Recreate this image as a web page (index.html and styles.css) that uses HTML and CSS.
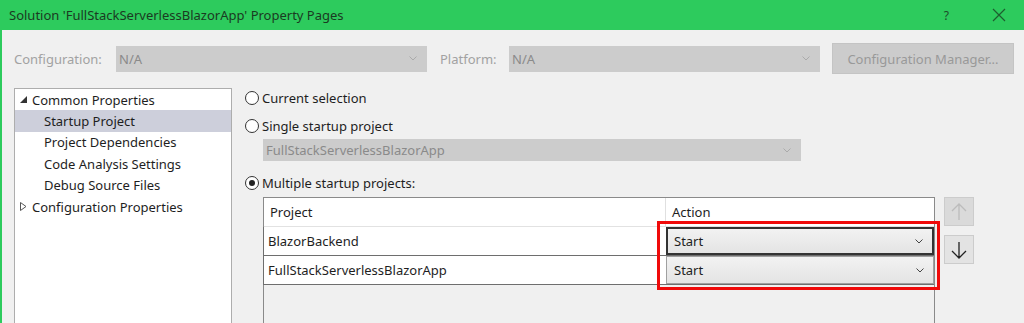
FILE: index.html
```html
<!DOCTYPE html>
<html>
<head>
<meta charset="utf-8">
<link rel="stylesheet" href="styles.css">
</head>
<body>
<div class="dialog">
  <div class="titlebar">
    <span class="title">Solution 'FullStackServerlessBlazorApp' Property Pages</span>
    <span class="tb-help">?</span>
    <svg class="tb-close" width="14" height="14" viewBox="0 0 14 14"><path d="M1 1 L13 13 M13 1 L1 13" stroke="#1d5e2f" stroke-width="1.2" fill="none"/></svg>
  </div>
  <div class="content">
    <div class="config-row">
      <span class="lbl lbl-config">Configuration:</span>
      <div class="combo combo-config"><span>N/A</span><svg class="chev" width="8" height="5" viewBox="0 0 8 5"><path d="M0.5 0.5 L4 4 L7.5 0.5" stroke="#aaa" fill="none"/></svg></div>
      <span class="lbl lbl-platform">Platform:</span>
      <div class="combo combo-platform"><span>N/A</span><svg class="chev" width="8" height="5" viewBox="0 0 8 5"><path d="M0.5 0.5 L4 4 L7.5 0.5" stroke="#aaa" fill="none"/></svg></div>
      <div class="btn-cm">Configuration Manager...</div>
    </div>
    <div class="main">
      <div class="tree">
        <div class="node top"><svg class="tri" width="7" height="7" viewBox="0 0 7 7"><path d="M7 0 L7 7 L0 7 Z" fill="#333"/></svg><span>Common Properties</span></div>
        <div class="node child selected"><span>Startup Project</span></div>
        <div class="node child"><span>Project Dependencies</span></div>
        <div class="node child"><span>Code Analysis Settings</span></div>
        <div class="node child"><span>Debug Source Files</span></div>
        <div class="node top"><svg class="tri" width="7" height="9" viewBox="0 0 7 9"><path d="M0.5 0.5 L6 4.5 L0.5 8.5 Z" fill="none" stroke="#555"/></svg><span>Configuration Properties</span></div>
      </div>
      <div class="pane">
        <label class="radio r1"><span class="rb"></span><span>Current selection</span></label>
        <label class="radio r2"><span class="rb"></span><span>Single startup project</span></label>
        <div class="combo combo-single"><span>FullStackServerlessBlazorApp</span><svg class="chev" width="8" height="5" viewBox="0 0 8 5"><path d="M0.5 0.5 L4 4 L7.5 0.5" stroke="#aaa" fill="none"/></svg></div>
        <label class="radio r3"><span class="rb checked"></span><span>Multiple startup projects:</span></label>
        <div class="grid-area">
          <div class="grid">
            <div class="grow ghead">
              <div class="c1">Project</div>
              <div class="c2">Action</div>
            </div>
            <div class="grow gdata">
              <div class="c1">BlazorBackend</div>
              <div class="c2"><div class="act focused"><span>Start</span><svg width="8" height="5" viewBox="0 0 8 5"><path d="M0.5 0.5 L4 4 L7.5 0.5" stroke="#444" fill="none"/></svg></div></div>
            </div>
            <div class="grow gdata">
              <div class="c1">FullStackServerlessBlazorApp</div>
              <div class="c2"><div class="act"><span>Start</span><svg width="8" height="5" viewBox="0 0 8 5"><path d="M0.5 0.5 L4 4 L7.5 0.5" stroke="#444" fill="none"/></svg></div></div>
            </div>
            <div class="highlight"></div>
          </div>
          <div class="movers">
            <div class="mv disabled"><svg width="16" height="18" viewBox="0 0 16 18"><path d="M8 17 L8 1 M1 8 L8 1 L15 8" stroke="#bcbcbc" stroke-width="1.3" fill="none"/></svg></div>
            <div class="mv"><svg width="16" height="18" viewBox="0 0 16 18"><path d="M8 1 L8 17 M1 10 L8 17 L15 10" stroke="#222" stroke-width="1.3" fill="none"/></svg></div>
          </div>
        </div>
      </div>
    </div>
  </div>
</div>
</body>
</html>
```

FILE: styles.css
```css
* { box-sizing: border-box; }
html, body { margin: 0; padding: 0; }
body {
  width: 1024px;
  height: 323px;
  overflow: hidden;
  background: #f0f0f0;
  font-family: "Noto Sans", "Open Sans", sans-serif;
  font-size: 13px;
  color: #1e1e1e;
}
.dialog {
  height: 323px;
  border-left: 2px solid #2dcb5d;
  background: #f0f0f0;
}
.titlebar {
  height: 30px;
  margin-left: -2px;
  background: #2dcb5d;
  display: flex;
  align-items: center;
  padding-left: 9px;
  color: #1b3a22;
}
.title { font-size: 13px; flex: 1; }
.tb-help { font-size: 12px; margin-right: 43px; color: #1d4a2a; }
.tb-close { margin-right: 18px; }

.content { padding-left: 12px; }
.config-row {
  display: flex;
  align-items: center;
  height: 31px;
  margin-top: 13px;
}
.lbl { color: #a2a2a2; }
.lbl-config { width: 102px; }
.combo {
  height: 26px;
  background: #cccccc;
  color: #8a8a8a;
  display: flex;
  align-items: center;
  padding: 0 10px 0 3px;
  justify-content: space-between;
}
.combo-config { width: 311px; }
.lbl-platform { margin-left: 13px; width: 69px; }
.combo-platform { width: 311px; }
.btn-cm {
  margin-left: 12px;
  width: 182px;
  height: 31px;
  background: #cccccc;
  border: 1px solid #c4c4c4;
  color: #999;
  display: flex;
  align-items: center;
  justify-content: center;
}

.main {
  display: flex;
  margin-top: 14px;
}
.tree {
  width: 218px;
  height: 240px;
  background: #fff;
  border: 1px solid #adadad;
  padding-top: 0;
}
.node {
  height: 21.4px;
  display: flex;
  align-items: center;
}
.node.top { padding-left: 5px; }
.node.top .tri { margin-right: 5px; }
.node.child { padding-left: 29px; }
.node.selected { background: #cdcfdb; }

.pane {
  margin-left: 13px;
  flex: 1;
  position: relative;
}
.radio {
  display: flex;
  align-items: center;
  height: 20px;
}
.r1 { margin-top: 0; }
.r2 { margin-top: 8px; }
.r3 { margin-top: 12px; }
.rb {
  width: 14px;
  height: 14px;
  border: 1px solid #333;
  border-radius: 50%;
  background: #fff;
  margin-right: 3px;
  position: relative;
}
.rb.checked::after {
  content: "";
  position: absolute;
  left: 3px;
  top: 3px;
  width: 6px;
  height: 6px;
  border-radius: 50%;
  background: #222;
}
.combo-single {
  margin-left: 18px;
  margin-top: 3px;
  width: 538px;
  height: 22px;
}
.grid-area {
  display: flex;
  margin-top: 4px;
  margin-left: 18px;
}
.grid {
  width: 672px;
  height: 140px;
  border: 1px solid #8a8a8a;
  border-bottom: none;
  background: #f0f0f0;
  position: relative;
}
.grow { display: flex; height: 29px; }
.ghead { background: #fff; border-bottom: 1px solid #e2e2e2; height: 29px; }
.ghead .c1 { border-right: 1px solid #e0e0e0; }
.c1 { width: 402px; padding-left: 6px; display: flex; align-items: center; }
.c2 { flex: 1; display: flex; align-items: center; }
.ghead .c2 { padding-left: 6px; }
.gdata { background: #fff; border-bottom: 1px solid #6e6e6e; border-left: 1px solid #6e6e6e; margin-left: -1px; }
.gdata .c1 { padding-left: 4px; }
.act {
  width: 100%;
  height: 100%;
  border: 1px solid #a0a0a0;
  background: linear-gradient(#f2f2f2, #e4e4e4);
  display: flex;
  align-items: center;
  justify-content: space-between;
  padding: 0 9px 0 7px;
}
.act.focused { border: 2px solid #333; padding-left: 6px; }
.highlight {
  position: absolute;
  left: 393px;
  top: 23px;
  width: 283px;
  height: 69px;
  border: 3px solid #f00a0a;
}
.movers {
  margin-left: 9px;
  display: flex;
  flex-direction: column;
  gap: 9px;
}
.mv {
  width: 30px;
  height: 29px;
  background: #e3e3e3;
  border: 1px solid #cccccc;
  display: flex;
  align-items: center;
  justify-content: center;
}
.mv.disabled { background: #dadada; }
```
